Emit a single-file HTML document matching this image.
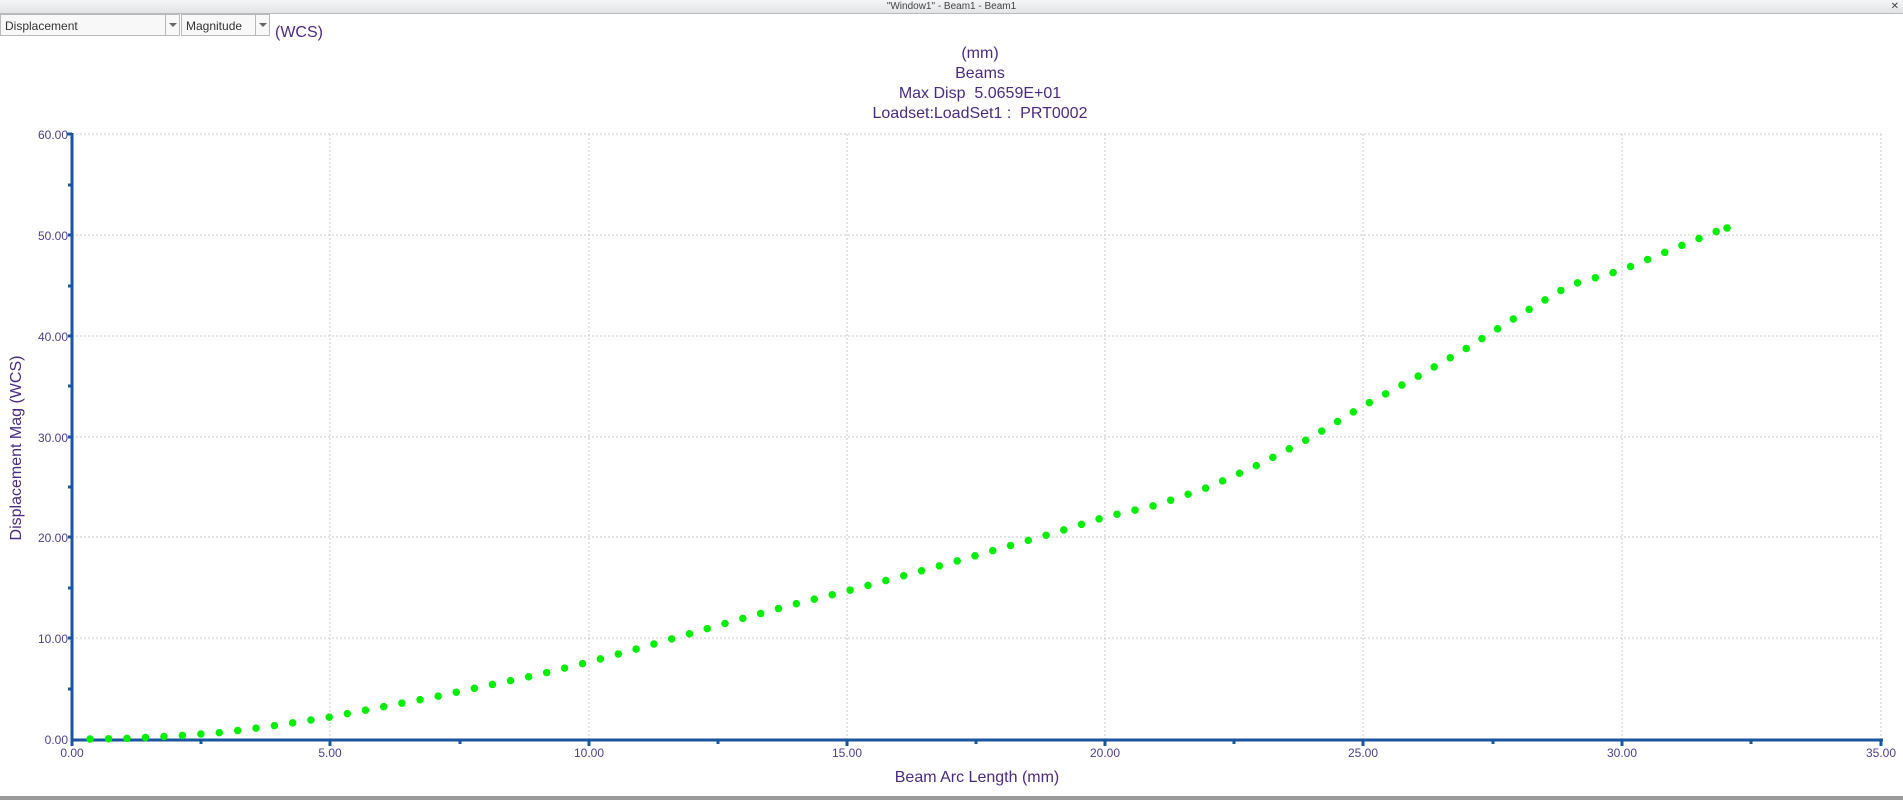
<!DOCTYPE html>
<html><head><style>
html,body{margin:0;padding:0;width:1903px;height:800px;background:#fff;overflow:hidden;font-family:"Liberation Sans",sans-serif}
.tb{position:absolute;left:0;top:0;width:1903px;height:13px;background:linear-gradient(#f4f5f6,#e2e4e6);border-bottom:1px solid #b8babc;font-size:10px;color:#444;text-align:center;line-height:13px}
.dd{position:absolute;top:14px;height:22px;border:1px solid #b9b9b9;background:#f8f8f8;font-size:12px;color:#333;line-height:22px;box-sizing:border-box;padding-left:4px}
.ar{position:absolute;top:14px;height:22px;width:15px;border:1px solid #b9b9b9;background:#f8f8f8;box-sizing:border-box}
.ar:after{content:"";position:absolute;left:3px;top:8px;border-left:4px solid transparent;border-right:4px solid transparent;border-top:4px solid #666}
svg text{white-space:pre}
</style></head><body>
<div class="tb">"Window1" - Beam1 - Beam1<span style="position:absolute;right:4px;top:0">✕</span></div>
<div class="dd" style="left:0;width:166px">Displacement</div><div class="ar" style="left:165px"></div>
<div class="dd" style="left:181px;width:75px">Magnitude</div><div class="ar" style="left:255px"></div>
<svg width="1903" height="800" style="position:absolute;left:0;top:0" font-family="Liberation Sans, sans-serif">
<text x="275" y="37" font-size="16" fill="#4a2a80">(WCS)</text>
<g fill="#4a2a80" font-size="16" text-anchor="middle">
<text x="980" y="58">(mm)</text><text x="980" y="78">Beams</text><text x="980" y="98">Max Disp  5.0659E+01</text><text x="980" y="118">Loadset:LoadSet1 :  PRT0002</text>
<text x="977" y="782">Beam Arc Length (mm)</text>
<text transform="translate(21,448) rotate(-90)">Displacement Mag (WCS)</text>
</g>
<g stroke="#c8c8c8" stroke-dasharray="2,2" stroke-width="1">
<path d="M330 134V739M589 134V739M847 134V739M1105 134V739M1363 134V739M1622 134V739M1881 134V739"/>
<path d="M72 134H1881M72 235H1881M72 336H1881M72 437H1881M72 537H1881M72 638H1881"/>
</g>
<g fill="#4a3f8a" font-size="12" text-anchor="end">
<text x="68" y="139">60.00</text><text x="68" y="240">50.00</text><text x="68" y="341">40.00</text><text x="68" y="442">30.00</text><text x="68" y="542">20.00</text><text x="68" y="643">10.00</text><text x="68" y="744">0.00</text>
</g>
<g fill="#4a3f8a" font-size="12" text-anchor="middle">
<text x="72" y="757">0.00</text><text x="330" y="757">5.00</text><text x="589" y="757">10.00</text><text x="847" y="757">15.00</text><text x="1105" y="757">20.00</text><text x="1363" y="757">25.00</text><text x="1622" y="757">30.00</text><text x="1881" y="757">35.00</text>
</g>
<g stroke="#1a56a0" stroke-width="3" fill="none">
<path d="M72 133V740H1883"/>
<path d="M67 134H72M68 185H72M68 235H72M68 286H72M68 336H72M68 386H72M68 437H72M68 487H72M68 537H72M68 588H72M68 638H72M68 689H72"/>
<path d="M72 740v6M201 740v4M330 740v6M460 740v4M589 740v6M718 740v4M847 740v6M976 740v4M1105 740v6M1234 740v4M1363 740v6M1493 740v4M1622 740v6M1751 740v4M1881 740v6"/>
</g>
<polyline fill="none" stroke="#00ee00" stroke-width="7.5" stroke-linecap="round" stroke-dasharray="0 18.5" points="90,739 124,738.5 175,736 227,732 279,725 330,717 382,707 434,697 485,686 537,675 589,662 640,648 692,633 744,618 795,604 847,591 899,577 950,563 1002,548 1054,533 1105,517 1157,505 1209,487 1260,464 1312,437 1363,406 1415,378 1467,348 1518,316 1570,285 1622,270 1673,249 1725,228"/>
<circle cx="1727" cy="228" r="3.8" fill="#00ee00"/>
<rect x="0" y="796" width="1903" height="4" fill="#9a9a9a"/>
</svg>
</body></html>
